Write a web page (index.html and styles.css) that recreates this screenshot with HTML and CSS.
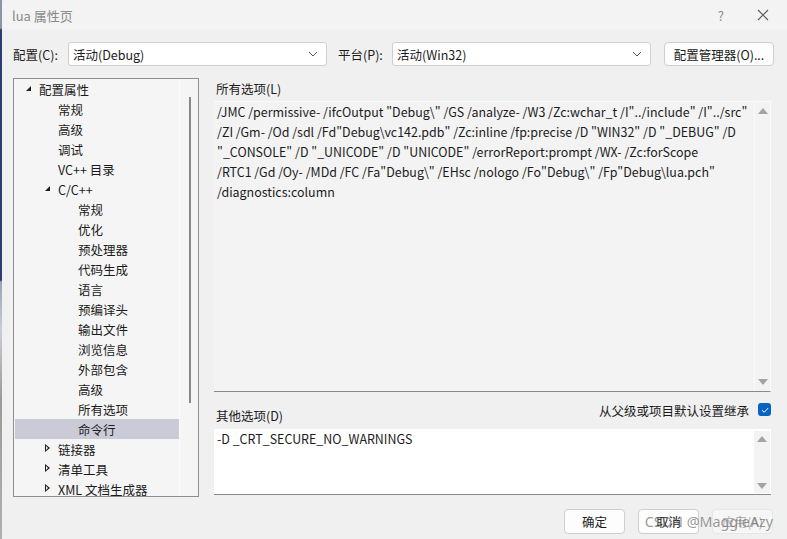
FILE: index.html
```html
<!DOCTYPE html>
<html lang="zh-CN">
<head>
<meta charset="utf-8">
<title>lua 属性页</title>
<link rel="stylesheet" href="styles.css">
</head>
<body>
<div class="desk"></div>
<div class="dialog">
  <div class="titlebar">
    <span class="title">lua 属性页</span>
    <span class="tb-help">?</span>
    <svg class="tb-close" width="12" height="12" viewBox="0 0 12 12"><path d="M1 1 L11 11 M11 1 L1 11" stroke="#5a5a5a" stroke-width="1.1" fill="none"/></svg>
  </div>

  <div class="configrow">
    <span class="lbl">配置(C):</span>
    <div class="select sel-config"><span>活动(Debug)</span><svg class="chev" width="10" height="6" viewBox="0 0 10 6"><path d="M1 1 L5 5 L9 1" stroke="#555" stroke-width="1" fill="none"/></svg></div>
    <span class="lbl lbl-plat">平台(P):</span>
    <div class="select sel-plat"><span>活动(Win32)</span><svg class="chev" width="10" height="6" viewBox="0 0 10 6"><path d="M1 1 L5 5 L9 1" stroke="#555" stroke-width="1" fill="none"/></svg></div>
    <button class="btn btn-mgr">配置管理器(O)...</button>
  </div>

  <div class="main">
    <div class="tree">
      <div class="tree-list">
        <div class="row l0"><span class="tw exp"></span>配置属性</div>
        <div class="row l1"><span class="tw"></span>常规</div>
        <div class="row l1"><span class="tw"></span>高级</div>
        <div class="row l1"><span class="tw"></span>调试</div>
        <div class="row l1"><span class="tw"></span>VC++ 目录</div>
        <div class="row l1"><span class="tw exp"></span>C/C++</div>
        <div class="row l2"><span class="tw"></span>常规</div>
        <div class="row l2"><span class="tw"></span>优化</div>
        <div class="row l2"><span class="tw"></span>预处理器</div>
        <div class="row l2"><span class="tw"></span>代码生成</div>
        <div class="row l2"><span class="tw"></span>语言</div>
        <div class="row l2"><span class="tw"></span>预编译头</div>
        <div class="row l2"><span class="tw"></span>输出文件</div>
        <div class="row l2"><span class="tw"></span>浏览信息</div>
        <div class="row l2"><span class="tw"></span>外部包含</div>
        <div class="row l2"><span class="tw"></span>高级</div>
        <div class="row l2"><span class="tw"></span>所有选项</div>
        <div class="row l2 selected"><span class="tw"></span>命令行</div>
        <div class="row l1"><span class="tw col"></span>链接器</div>
        <div class="row l1"><span class="tw col"></span>清单工具</div>
        <div class="row l1"><span class="tw col"></span>XML 文档生成器</div>
      </div>
      <div class="tree-scroll"><div class="thumb"></div></div>
    </div>

    <div class="right">
      <div class="sec-label">所有选项(L)</div>
      <div class="box box-all">
        <div class="box-text">/JMC /permissive- /ifcOutput "Debug\" /GS /analyze- /W3 /Zc:wchar_t /I"../include" /I"../src"
/ZI /Gm- /Od /sdl /Fd"Debug\vc142.pdb" /Zc:inline /fp:precise /D "WIN32" /D "_DEBUG" /D
"_CONSOLE" /D "_UNICODE" /D "UNICODE" /errorReport:prompt /WX- /Zc:forScope
/RTC1 /Gd /Oy- /MDd /FC /Fa"Debug\" /EHsc /nologo /Fo"Debug\" /Fp"Debug\lua.pch"
/diagnostics:column</div>
        <div class="vscroll"><span class="arr up"></span><span class="arr down"></span></div>
      </div>
      <div class="other-row">
        <span class="sec-label2">其他选项(D)</span>
        <span class="inherit">从父级或项目默认设置继承</span>
        <span class="check"><svg width="12" height="12" viewBox="0 0 12 12"><path d="M3 6.2 L5.2 8.3 L9.2 4" stroke="#fff" stroke-width="1" fill="none"/></svg></span>
      </div>
      <div class="box box-other">
        <div class="box-text">-D _CRT_SECURE_NO_WARNINGS</div>
        <div class="vscroll"><span class="arr up"></span><span class="arr down"></span></div>
      </div>
    </div>
  </div>

  <div class="buttons">
    <button class="btn btn-b">确定</button>
    <button class="btn btn-b">取消</button>
    <button class="btn btn-b disabled">应用(A)</button>
    <span class="watermark">CSDN @MaggieAzy</span>
  </div>
</div>
</body>
</html>
```

FILE: styles.css
```css
* { box-sizing: border-box; }
html, body { margin: 0; padding: 0; }
body {
  width: 787px;
  height: 539px;
  overflow: hidden;
  display: flex;
  background: #f0f0f0;
  font-family: "Noto Sans CJK SC", "Noto Sans", sans-serif;
  font-size: 12px;
  color: #1b1b1b;
}
.desk {
  width: 2px;
  flex: none;
  background: linear-gradient(to bottom, #8a93a8 0, #8a93a8 28px, #2e3c72 30px, #2e3c72 280px, #9aa3b8 282px, #c8ccd4 330px, #9a9a9a 400px, #b0b0b0 539px);
}
.dialog {
  flex: 1;
  position: relative;
  display: flex;
  flex-direction: column;
  background: #f0f0f0;
  border-top-left-radius: 6px;
}
.titlebar {
  height: 30px;
  display: flex;
  align-items: center;
  padding: 0 18px 0 10px;
  background: #f3f3f3;
  border-top-left-radius: 6px;
}
.title { color: #8a8a8a; font-size: 13px; flex: 1; }
.tb-help { color: #8a8a8a; font-size: 13px; margin-right: 33px; }
.tb-close { display: block; }

.configrow {
  margin-top: 12px;
  height: 24px;
  display: flex;
  align-items: center;
  padding: 0 12px 0 11px;
}
.lbl { width: 55px; flex: none; font-size: 12.5px; }
.lbl-plat { margin-left: 11px; width: 54px; }
.select {
  height: 24px;
  background: #fff;
  border: 1px solid #cfcfcf;
  border-radius: 3px;
  display: flex;
  align-items: center;
  justify-content: space-between;
  padding: 0 8px 0 4px;
  font-size: 12.5px;
}
.sel-config { width: 259px; }
.sel-plat { width: 259px; }
.btn {
  font-family: inherit;
  font-size: 12.5px;
  color: #1b1b1b;
  background: #fdfdfd;
  border: 1px solid #cfcfcf;
  border-radius: 4px;
  height: 24px;
  padding: 0;
}
.btn-mgr { margin-left: 13px; width: 110px; height: 24px; }

.main {
  margin-top: 12px;
  height: 419px;
  display: flex;
  padding: 0 16px 0 11px;
}
.tree {
  width: 186px;
  flex: none;
  border: 1px solid #8f8f8f;
  background: #f5f5f5;
  display: flex;
  overflow: hidden;
}
.tree-list { width: 166px; flex: none; border-right: 1px solid #fbfbfb; }
.row {
  height: 20px;
  display: flex;
  align-items: center;
  white-space: nowrap;
  font-size: 12.5px;
}
.row.selected { background: #cbcbd8; margin-left: 1px; }
.row.selected.l2 { padding-left: 49px; }
.l0 { padding-left: 11px; }
.l1 { padding-left: 30px; }
.l2 { padding-left: 50px; }
.tw { width: 14px; height: 10px; flex: none; position: relative; }
.tw.exp::before {
  content: "";
  position: absolute;
  left: 1px; top: 2px;
  width: 0; height: 0;
  border-left: 5px solid transparent;
  border-bottom: 5px solid #1e1e1e;
}
.tw.col::before {
  content: "";
  position: absolute;
  left: 1px; top: 0;
  width: 0; height: 0;
  border-top: 4.5px solid transparent;
  border-bottom: 4.5px solid transparent;
  border-left: 5px solid #1e1e1e;
}
.tw.col::after {
  content: "";
  position: absolute;
  left: 2px; top: 2px;
  width: 0; height: 0;
  border-top: 2.5px solid transparent;
  border-bottom: 2.5px solid transparent;
  border-left: 2.8px solid #f5f5f5;
}
.tree-scroll { flex: 1; padding-top: 18px; display: flex; justify-content: center; }
.thumb { width: 2px; height: 306px; background: #888; margin-left: 1px; }

.right {
  flex: 1;
  margin-left: 15px;
  display: flex;
  flex-direction: column;
}
.sec-label { height: 23px; padding-left: 2px; padding-top: 1px; font-size: 12.5px; }
.box {
  display: flex;
  border-bottom: 1px solid #8a8a8a;
}
.box-all { height: 291px; background: #f3f3f3; border-top: 1px solid #fafafa; border-right: 1px solid #fafafa; }
.box-other { height: 66px; background: #fff; }
.box-text {
  flex: 1;
  white-space: pre;
  line-height: 20px;
  padding: 0 0 0 3px;
  font-size: 12.45px;
  overflow: hidden;
}
.vscroll {
  width: 16px;
  flex: none;
  position: relative;
  border-left: 1px solid #fafafa;
}
.box-other .vscroll { background: #f3f3f3; margin: 2px 1px 1px 0; border-left: none; }
.arr { position: absolute; left: 3px; width: 0; height: 0; border-left: 5px solid transparent; border-right: 5px solid transparent; }
.arr.up { top: 6px; border-bottom: 6px solid #a3a3a3; }
.arr.down { bottom: 6px; border-top: 6px solid #a3a3a3; }
.box-other .arr.up { top: 5px; }
.box-other .arr.down { bottom: 4px; }

.other-row {
  height: 37px;
  display: flex;
}
.sec-label2 { align-self: flex-end; padding-left: 2px; padding-bottom: 4px; font-size: 12.5px; flex: 1; }
.inherit { margin-top: 9px; font-size: 12.5px; margin-right: 9px; }
.check {
  margin-top: 11px;
  width: 13px; height: 13px;
  background: #0563c1;
  border-radius: 3px;
  display: flex; align-items: center; justify-content: center;
}
.check svg { display: block; }

.buttons {
  margin-top: 12px;
  display: flex;
  justify-content: flex-end;
  gap: 13px;
  padding-right: 14px;
  position: relative;
}
.btn-b { width: 61px; height: 25px; }
.btn-b.disabled { background: #f6f6f6; border-color: #e6e6e6; color: #b0b0b0; }
.watermark {
  position: absolute;
  right: 14px;
  top: 3px;
  font-family: "Noto Sans", sans-serif;
  font-size: 14.3px;
  color: rgba(110, 110, 110, 0.7);
  pointer-events: none;
}
```
